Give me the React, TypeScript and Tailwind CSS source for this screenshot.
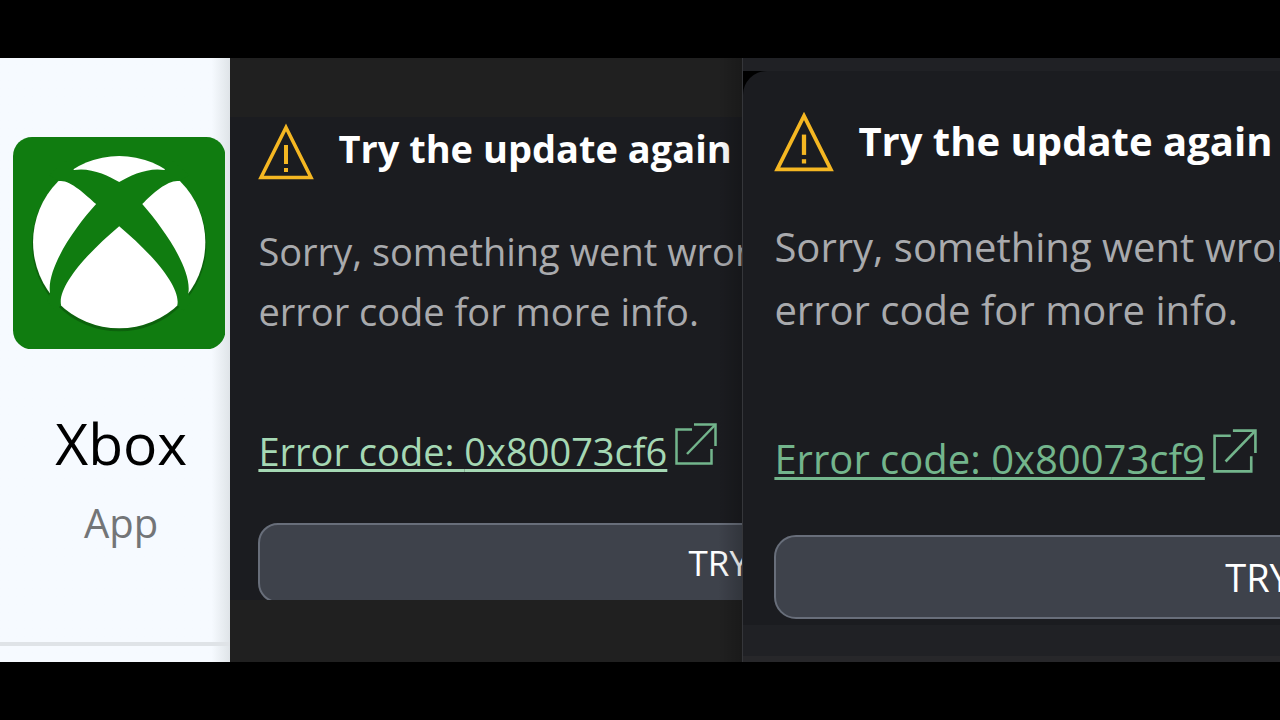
import clsx from "clsx"

type Props = {
  code: string
  large?: boolean
}

function XboxLogo() {
  return (
    <svg viewBox="0 0 212 212" className="w-full" role="img" aria-label="Xbox logo">
      <rect width="212" height="212" rx="19" fill="#107c10" />
      <circle cx="106" cy="107" r="87" fill="#0c620c" />
      <circle cx="106" cy="105" r="86" fill="#fff" />
      <path
        fill="#107c10"
        d="M61 33 C76 30 95 38 106 45 C117 38 136 30 151 33 L160 24 L176 38 L166 44 C156 42 140 55 129 67 C150 91 179 132 175 156 L178 164 L170 173 L164 168 C168 149 137 115 106 89 C75 115 44 149 48 168 L42 173 L34 164 L37 156 C33 132 61 91 83 67 C72 57 56 42 46 44 L36 38 L52 24 Z"
      />
    </svg>
  )
}

function WarningIcon({ className }: { className: string }) {
  return (
    <svg viewBox="0 0 56 58" className={className} fill="none" stroke="#f5b722" aria-hidden="true">
      <path d="M28 4.5 L53 54.5 H3 Z" strokeWidth="3.5" />
      <path d="M28 22 V41" strokeWidth="4" />
      <path d="M28 45 V49" strokeWidth="4" />
    </svg>
  )
}

function OpenIcon({ className }: { className: string }) {
  return (
    <svg viewBox="0 0 42 42" className={className} fill="none" stroke="#73b58c" strokeWidth="2.5" aria-hidden="true">
      <path d="M17 6.5 H1.5 V40.5 H36.5 V26" />
      <path d="M19 1.5 H40.5 V23" />
      <path d="M40 2 L12 31" />
    </svg>
  )
}

function ErrorCard({ code, large }: Props) {
  return (
    <div className={clsx("font-['Open_Sans','Noto_Sans',sans-serif] whitespace-nowrap", large ? "pl-[31px] pt-10" : "pl-7 pt-1.5")}>
      <div className="flex items-start">
        <WarningIcon className={large ? "w-15 shrink-0" : "w-14 shrink-0"} />
        <h2 className={clsx("pl-6 font-bold text-white", large ? "text-[40px] leading-[60px]" : "text-[38px] leading-[50px]")}>
          Try the update again
        </h2>
      </div>

      <p className={clsx("text-[#a9aaad]", large ? "mt-[42px] text-[40px] leading-[63px]" : "mt-10 text-[38px] leading-[60px]")}>
        Sorry, something went wrong
        <br />
        error code for more info.
      </p>

      <div className={clsx("flex gap-2", large ? "mt-[88px]" : "mt-20")}>
        <a
          href="#"
          className={clsx(
            "underline underline-offset-3 leading-[60px] decoration-3",
            large ? "text-[#73b58c] text-[40px]" : "text-[#a5d8b4] text-[38px]"
          )}
        >
          Error code: {code}
        </a>
        <OpenIcon className={large ? "w-11 shrink-0 self-start" : "mt-0.5 w-[42px] shrink-0 self-start"} />
      </div>

      <button
        className={clsx(
          "block border-2 border-[#686e7a] bg-[#3e424b] text-white",
          large ? "mt-[46px] h-[84px] w-[216%] rounded-[22px] text-[38px]" : "mt-[42px] h-20 w-[214%] rounded-[20px] text-[35px]"
        )}
      >
        TRY AGAIN
      </button>
    </div>
  )
}

export default function App() {
  return (
    <div className="flex min-h-screen flex-col bg-black py-[58px]">
      <main className="grid flex-1 grid-cols-[minmax(0,18fr)_minmax(0,40fr)_minmax(0,42fr)]">
        <section className="flex flex-col bg-linear-to-r from-[#f6faff] from-92% to-[#dfe4e8] font-['Open_Sans','Noto_Sans',sans-serif] text-center">
          <div className="pt-[79px] pl-[13px] pr-[5px]">
            <XboxLogo />
          </div>
          <h1 className="mt-[60px] pl-3 text-[57px] leading-[68px] text-black">Xbox</h1>
          <p className="mt-5 pl-3 text-[40px] leading-[52px] text-[#737577]">App</p>
          <div className="mt-auto h-5 border-t-4 border-[#dfe3e7]" />
        </section>

        {/* the right edge darkens under the next panel */}
        <section className="relative flex flex-col overflow-hidden bg-[#202020] after:pointer-events-none after:absolute after:inset-y-0 after:right-0 after:w-6 after:bg-linear-to-r after:from-transparent after:to-black/20">
          <div className="mt-[59px] mb-[62px] flex-1 basis-0 overflow-hidden bg-[#1b1c20]">
            <ErrorCard code="0x80073cf6" />
          </div>
        </section>

        <section className="flex flex-col overflow-hidden border-l border-[#35363a] bg-[#202125]">
          <div className="mt-[13px] flex-1 basis-0 overflow-hidden bg-black">
            <div className="h-full rounded-tl-3xl bg-[#1b1c20]">
              <ErrorCard code="0x80073cf9" large />
            </div>
          </div>
          <div className="h-[37px] border-b-6 border-[#27272a]" />
        </section>
      </main>
    </div>
  )
}
